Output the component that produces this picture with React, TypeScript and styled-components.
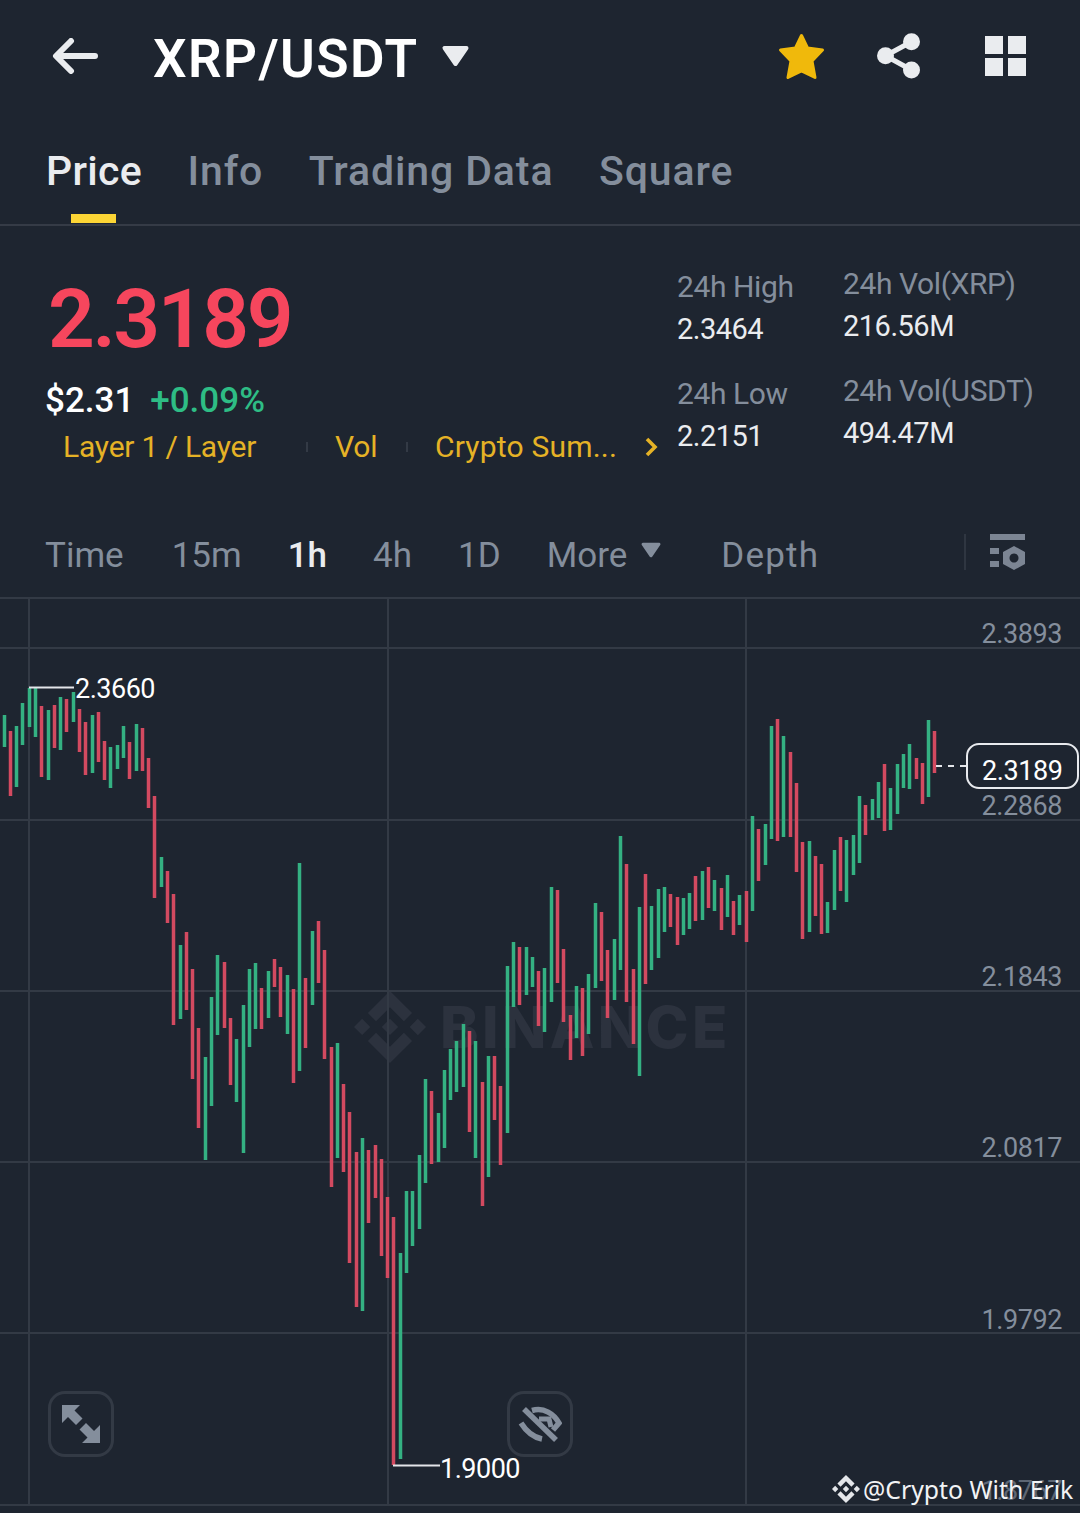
import React from "react";
import styled, { createGlobalStyle } from "styled-components";

const GlobalStyle = createGlobalStyle`
  html, body { margin: 0; padding: 0; background: #1e2530; }
  * { box-sizing: border-box; }
`;

const Page = styled.div`
  width: 1080px;
  height: 1513px;
  overflow: hidden;
  background: #1e2530;
  font-family: Roboto, "Noto Sans", sans-serif;
  color: #eaecef;
  display: flex;
  flex-direction: column;
`;

const Header = styled.header`
  height: 112px;
  flex: none;
  display: flex;
  align-items: center;
  padding: 0 54px 0 52px;
`;

const Title = styled.h1`
  margin: 6px 23px 0 55px;
  font-size: 53px;
  line-height: 60px;
  font-weight: 600;
  letter-spacing: 1.4px;
  color: #fff;
`;

const HeaderIcons = styled.div`
  margin-left: auto;
  display: flex;
  align-items: center;
`;

const IconSlot = styled.span<{ $gap?: number }>`
  display: flex;
  margin-right: ${(p) => p.$gap ?? 0}px;
`;

const Tabs = styled.nav`
  height: 114px;
  flex: none;
  display: flex;
  align-items: center;
  gap: 45.5px;
  padding: 6px 0 0 46px;
  border-bottom: 2px solid #353b46;
`;

const Tab = styled.div<{ $active?: boolean }>`
  position: relative;
  font-size: 41px;
  line-height: 48px;
  font-weight: 500;
  letter-spacing: ${(p) => (p.$active ? 0.3 : 0.9)}px;
  color: ${(p) => (p.$active ? "#eaecef" : "#848e9c")};
`;

const TabMark = styled.span`
  position: absolute;
  left: 25px;
  top: 67px;
  width: 45px;
  height: 9px;
  background: #fcd535;
`;

const Stats = styled.section`
  height: 269px;
  flex: none;
  display: flex;
  padding-left: 45px;
`;

const PriceColumn = styled.div`
  width: 632px;
  flex: none;
  display: flex;
  flex-direction: column;
`;

const BigPrice = styled.div`
  margin: 43px 0 0 3px;
  font-size: 82px;
  line-height: 100px;
  font-weight: 600;
  letter-spacing: -2.4px;
  color: #f6465d;
`;

const PriceRow = styled.div`
  margin-top: 10px;
  display: flex;
  align-items: baseline;
  gap: 16px;
  font-size: 35px;
  line-height: 44px;
  font-weight: 500;
`;

const Fiat = styled.span`
  color: #fff;
`;

const Change = styled.span`
  color: #2ebd85;
`;

const TagRow = styled.div`
  margin: 5px 0 0 18px;
  display: flex;
  align-items: center;
  font-size: 30px;
  line-height: 38px;
  color: #e5b226;
`;

const Tag = styled.span<{ $w: number; $ls?: number }>`
  width: ${(p) => p.$w}px;
  flex: none;
  white-space: nowrap;
  letter-spacing: ${(p) => p.$ls ?? -0.2}px;
`;

const TagSep = styled.i`
  width: 2px;
  height: 10px;
  flex: none;
  margin-right: 27px;
  background: #333a45;
`;

const StatColumn = styled.div<{ $w: number; $top: number }>`
  width: ${(p) => p.$w}px;
  flex: none;
  padding-top: ${(p) => p.$top}px;
`;

const StatLabel = styled.div<{ $gap?: number }>`
  margin-top: ${(p) => p.$gap ?? 0}px;
  font-size: 30px;
  line-height: 38px;
  letter-spacing: -0.4px;
  color: #848e9c;
  white-space: nowrap;
`;

const StatValue = styled.div`
  margin-top: 4px;
  font-size: 29px;
  line-height: 38px;
  letter-spacing: -0.5px;
  color: #eaecef;
  white-space: nowrap;
`;

const Intervals = styled.div`
  height: 104px;
  flex: none;
  display: flex;
  align-items: center;
  padding: 20px 54px 0 45px;
  border-bottom: 2px solid #333a45;
`;

const Interval = styled.span<{ $active?: boolean; $gap: number; $left?: number; $ls?: number }>`
  margin: 0 ${(p) => p.$gap}px 0 ${(p) => p.$left ?? 0}px;
  font-size: 35px;
  line-height: 44px;
  letter-spacing: ${(p) => p.$ls ?? 0}px;
  font-weight: ${(p) => (p.$active ? 500 : 400)};
  color: ${(p) => (p.$active ? "#eaecef" : "#848e9c")};
`;

const MoreCaret = styled.span`
  display: flex;
  margin-bottom: 12px;
`;

const IntervalDivider = styled.i`
  width: 2px;
  height: 36px;
  margin: 0 24px 8px auto;
  background: #2f3641;
`;

const ToolSlot = styled.span`
  display: flex;
  margin-bottom: 8px;
`;

const Chart = styled.main`
  position: relative;
  flex: 1;
  min-height: 0;
`;

const ChartSvg = styled.svg`
  position: absolute;
  left: 0;
  top: 0;
`;

const Watermark = styled.div`
  position: absolute;
  left: 354px;
  top: 392px;
  display: flex;
  align-items: center;
  gap: 14px;
  font-family: Inter, Roboto, sans-serif;
  font-size: 58px;
  line-height: 72px;
  font-weight: 800;
  letter-spacing: 3.4px;
  color: #2c323e;
`;

const AxisLabel = styled.span<{ $y: number; $dim?: boolean }>`
  position: absolute;
  right: 18px;
  top: ${(p) => p.$y}px;
  font-size: 27px;
  line-height: 34px;
  letter-spacing: -0.4px;
  color: ${(p) => (p.$dim ? "#5d6673" : "#848e9c")};
`;

const PriceBadge = styled.div`
  position: absolute;
  left: 966px;
  top: 144px;
  width: 113px;
  height: 46px;
  padding: 9px 0 0 14px;
  border: 2px solid #e8eaee;
  border-radius: 13px;
  background: #1e2530;
  font-size: 27px;
  line-height: 34px;
  letter-spacing: -0.4px;
  color: #fff;
`;

const Extreme = styled.span<{ $x: number; $y: number }>`
  position: absolute;
  left: ${(p) => p.$x}px;
  top: ${(p) => p.$y}px;
  font-size: 27px;
  line-height: 34px;
  letter-spacing: -0.5px;
  color: #fff;
`;

const FloatButton = styled.div<{ $x: number }>`
  position: absolute;
  left: ${(p) => p.$x}px;
  top: 792px;
  width: 66px;
  height: 66px;
  display: flex;
  align-items: center;
  justify-content: center;
  border: 3px solid #333a45;
  border-radius: 17px;
`;

const Credit = styled.div`
  position: absolute;
  left: 832px;
  top: 873px;
  display: flex;
  align-items: center;
  gap: 3px;
  font-family: "Noto Sans", Roboto, sans-serif;
  font-size: 24.8px;
  line-height: 34px;
  color: #f2f3f5;
  white-space: nowrap;
`;

const BINANCE_LOGO =
  "M16.624 13.9202l2.7175 2.7154-7.353 7.353-7.353-7.352 2.7175-2.7164 4.6355 4.6595 4.6356-4.6595zm4.6366-4.6366L24 12l-2.7154 2.7164L18.5682 12l2.6924-2.7164zm-9.272.001l2.7163 2.6914-2.7164 2.7174v-.001L9.2721 12l2.7164-2.7154zm-9.2722-.001L5.4088 12l-2.6914 2.6924L0 12l2.7164-2.7164zM11.9885.0115l7.353 7.329-2.7174 2.7154-4.6356-4.6356-4.6355 4.6595-2.7174-2.7154 7.353-7.353z";

const BinanceMark = ({ size, color }: { size: number; color: string }) => (
  <svg width={size} height={size} viewBox="0 0 24 24" fill={color}>
    <path d={BINANCE_LOGO} />
  </svg>
);

// [top, bottom, 1 = green / 0 = red], absolute page y
const CANDLES: [number, number, number][] = [
  [715,747,1],[731,796,0],[726,787,1],[703,745,1],[688,727,1],[688,737,1],[706,777,0],[710,780,1],[705,748,0],[697,750,1],
  [699,732,0],[692,722,1],[709,752,0],[722,775,0],[715,773,1],[712,762,0],[741,780,0],[747,788,1],[745,769,1],[726,758,1],
  [742,779,0],[724,771,1],[728,771,0],[758,808,0],[796,898,0],[857,887,1],[871,923,0],[894,1025,0],[945,1019,1],[932,1010,0],
  [969,1079,0],[1028,1128,0],[1057,1160,1],[997,1106,1],[955,1035,1],[962,1028,0],[1018,1085,0],[1039,1102,1],[1005,1153,1],[969,1047,1],
  [963,1029,1],[988,1029,0],[971,1018,1],[959,987,0],[967,1017,0],[975,1034,1],[989,1083,0],[863,1071,1],[978,1048,0],[931,1005,1],
  [921,983,0],[950,1059,0],[1047,1187,0],[1043,1158,1],[1084,1172,0],[1112,1263,0],[1152,1307,0],[1138,1311,1],[1150,1223,0],[1145,1198,0],
  [1159,1256,0],[1197,1278,0],[1217,1465,0],[1253,1459,1],[1191,1273,1],[1191,1246,1],[1155,1229,1],[1079,1183,1],[1091,1164,0],[1113,1162,1],
  [1070,1148,1],[1049,1100,1],[1041,1092,1],[1024,1087,1],[1031,1132,0],[1041,1158,1],[1082,1206,0],[1056,1177,1],[1056,1120,0],[1086,1165,0],
  [966,1133,1],[942,1007,1],[947,1005,0],[947,995,1],[957,987,1],[971,1026,0],[968,1032,1],[887,1002,1],[890,983,0],[949,1022,0],
  [1015,1060,0],[986,1038,1],[988,1056,0],[974,1034,1],[903,988,1],[912,981,0],[950,1018,0],[939,1000,1],[836,970,1],[864,1002,0],
  [969,1044,0],[907,1076,1],[874,984,0],[906,970,1],[889,958,1],[887,932,1],[894,927,0],[897,945,0],[898,935,1],[893,929,1],
  [876,921,0],[871,920,1],[867,908,0],[880,911,1],[888,930,0],[875,917,1],[901,935,0],[895,925,1],[891,942,0],[816,911,1],
  [829,881,0],[824,865,1],[726,839,1],[719,841,0],[736,837,1],[752,837,0],[783,872,0],[842,939,0],[841,932,1],[856,916,0],
  [864,934,0],[902,933,1],[850,910,1],[837,891,0],[840,902,1],[835,875,1],[796,863,1],[805,835,0],[799,820,1],[782,818,1],
  [764,831,0],[788,830,1],[764,814,1],[754,788,1],[744,789,1],[758,779,0],[763,804,0],[720,797,1],[731,773,0],
];

const CHART_TOP = 599;
const GRID_Y = [648, 820, 991, 1162, 1333, 1505];
const GRID_X = [29, 388, 746];

const BackIcon = () => (
  <svg width="46" height="36" viewBox="0 0 46 36" fill="none" stroke="#eaecef" strokeWidth="6" strokeLinecap="round" strokeLinejoin="round">
    <path d="M43 18H5M19 3L4 18l15 15" />
  </svg>
);

const CaretIcon = ({ w, h, color }: { w: number; h: number; color: string }) => (
  <svg width={w} height={h} viewBox="0 0 28 22" fill={color} stroke={color} strokeWidth="4" strokeLinejoin="round">
    <path d="M3 3h22L14 19z" />
  </svg>
);

const StarIcon = () => (
  <svg width="47" height="47" viewBox="0 0 47 47" fill="#f0b90b" stroke="#f0b90b" strokeWidth="3" strokeLinejoin="round">
    <path d="M23.5 2.5l6 12.5 15 2-10.5 11 3 16.500-13.500-6.500-13.500 6.500 3-16.500L2.500 17l15-2z" />
  </svg>
);

const ShareIcon = () => (
  <svg width="44" height="46" viewBox="0 0 44 46" fill="#eaecef">
    <circle cx="34.500" cy="8.700" r="8.500" />
    <circle cx="8.500" cy="22.700" r="8.500" />
    <circle cx="34.500" cy="37" r="8.500" />
    <path d="M34.500 8.700L8.500 22.700 34.500 37" fill="none" stroke="#eaecef" strokeWidth="5" />
  </svg>
);

const GridIcon = () => (
  <svg width="41" height="40" viewBox="0 0 41 40" fill="#eaecef">
    <rect x="0" y="0" width="18" height="18" />
    <rect x="23" y="0" width="18" height="18" />
    <rect x="0" y="22" width="18" height="18" />
    <rect x="23" y="22" width="18" height="18" />
  </svg>
);

const ChevronIcon = () => (
  <svg width="13" height="20" viewBox="0 0 13 20" fill="none" stroke="#e5b226" strokeWidth="3.600">
    <path d="M2 2l8 8-8 8" />
  </svg>
);

const SettingsIcon = () => (
  <svg width="36" height="37" viewBox="0 0 36 37" fill="#7c8593">
    <rect x="0" y="0" width="35" height="6" />
    <rect x="0" y="14" width="9" height="6" />
    <rect x="0" y="27" width="9" height="6" />
    <path fillRule="evenodd" d="M24 12l11 6v12l-11 6-11-6V18zm0 7.500a4.500 4.500 0 1 0 .01 0z" />
  </svg>
);

const ExpandIcon = () => (
  <svg width="38" height="38" viewBox="0 0 38 38" fill="#848e9c">
    <path d="M0 0h18l-5.500 5.500 8 8-6.500 6.500-8-8L0 18z" />
    <path d="M38 38H20l5.500-5.500-8-8 6.500-6.500 8 8L38 20z" />
  </svg>
);

const EyeOffIcon = () => (
  <svg width="44" height="36" viewBox="0 0 44 36" fill="none" stroke="#848e9c" strokeWidth="5.500">
    <path d="M6 3l32 31" />
    <path d="M14 4.500C26 1 36 8 41 17l-6 7" />
    <path d="M21 13h10l2 8" strokeWidth="5" />
    <path d="M3 17c5 8 11 14 21 16" />
  </svg>
);

const ChartDrawing = () => (
  <ChartSvg width={1080} height={914} viewBox={`0 ${CHART_TOP} 1080 914`}>
    {GRID_Y.map((y) => (
      <line key={y} x1={0} x2={1080} y1={y} y2={y} stroke="#333a45" strokeWidth={2} />
    ))}
    {GRID_X.map((x) => (
      <line key={x} x1={x} x2={x} y1={CHART_TOP} y2={1505} stroke="#333a45" strokeWidth={2} />
    ))}
    {CANDLES.map(([top, bottom, up], i) => (
      <rect
        key={i}
        x={Math.round(4 + i * 6.29 - 1.5) - 0.25}
        y={top}
        width={3.5}
        height={bottom - top}
        fill={up ? "#34b182" : "#d34a60"}
      />
    ))}
    <path d="M29 687.500H74M393 1465.500H440" stroke="#e4e6ea" strokeWidth={2} fill="none" />
    <path d="M936 766H967" stroke="#e4e6ea" strokeWidth={2} strokeDasharray="6 6" fill="none" />
  </ChartSvg>
);

export default function App() {
  return (
    <Page>
      <GlobalStyle />
      <Header>
        <BackIcon />
        <Title>XRP/USDT</Title>
        <CaretIcon w={29} h={22} color="#eaecef" />
        <HeaderIcons>
          <IconSlot $gap={52}>
            <StarIcon />
          </IconSlot>
          <IconSlot $gap={64}>
            <ShareIcon />
          </IconSlot>
          <IconSlot>
            <GridIcon />
          </IconSlot>
        </HeaderIcons>
      </Header>
      <Tabs>
        <Tab $active>
          Price
          <TabMark />
        </Tab>
        <Tab>Info</Tab>
        <Tab>Trading Data</Tab>
        <Tab>Square</Tab>
      </Tabs>
      <Stats>
        <PriceColumn>
          <BigPrice>2.3189</BigPrice>
          <PriceRow>
            <Fiat>$2.31</Fiat>
            <Change>+0.09%</Change>
          </PriceRow>
          <TagRow>
            <Tag $w={243}>Layer 1 / Layer</Tag>
            <TagSep />
            <Tag $w={71}>Vol</Tag>
            <TagSep />
            <Tag $w={210} $ls={0.2}>Crypto Sum...</Tag>
            <ChevronIcon />
          </TagRow>
        </PriceColumn>
        <StatColumn $w={166} $top={42}>
          <StatLabel>24h High</StatLabel>
          <StatValue>2.3464</StatValue>
          <StatLabel $gap={27}>24h Low</StatLabel>
          <StatValue>2.2151</StatValue>
        </StatColumn>
        <StatColumn $w={230} $top={39}>
          <StatLabel>24h Vol(XRP)</StatLabel>
          <StatValue>216.56M</StatValue>
          <StatLabel $gap={27}>24h Vol(USDT)</StatLabel>
          <StatValue>494.47M</StatValue>
        </StatColumn>
      </Stats>
      <Intervals>
        <Interval $gap={48}>Time</Interval>
        <Interval $gap={46}>15m</Interval>
        <Interval $gap={46} $active>1h</Interval>
        <Interval $gap={46}>4h</Interval>
        <Interval $gap={46}>1D</Interval>
        <Interval $gap={13}>More</Interval>
        <MoreCaret>
          <CaretIcon w={22} h={16} color="#848e9c" />
        </MoreCaret>
        <Interval $gap={0} $left={59} $ls={1.2}>Depth</Interval>
        <IntervalDivider />
        <ToolSlot>
          <SettingsIcon />
        </ToolSlot>
      </Intervals>
      <Chart>
        <Watermark>
          <BinanceMark size={72} color="#2c323e" />
          BINANCE
        </Watermark>
        <ChartDrawing />
        <AxisLabel $y={18}>2.3893</AxisLabel>
        <AxisLabel $y={190}>2.2868</AxisLabel>
        <AxisLabel $y={361}>2.1843</AxisLabel>
        <AxisLabel $y={532}>2.0817</AxisLabel>
        <AxisLabel $y={704}>1.9792</AxisLabel>
        <AxisLabel $y={875} $dim>1.8767</AxisLabel>
        <PriceBadge>2.3189</PriceBadge>
        <Extreme $x={75} $y={73}>2.3660</Extreme>
        <Extreme $x={440} $y={853}>1.9000</Extreme>
        <FloatButton $x={48}>
          <ExpandIcon />
        </FloatButton>
        <FloatButton $x={507}>
          <EyeOffIcon />
        </FloatButton>
        <Credit>
          <BinanceMark size={28} color="#e4e6ea" />
          @Crypto With Erik
        </Credit>
      </Chart>
    </Page>
  );
}
